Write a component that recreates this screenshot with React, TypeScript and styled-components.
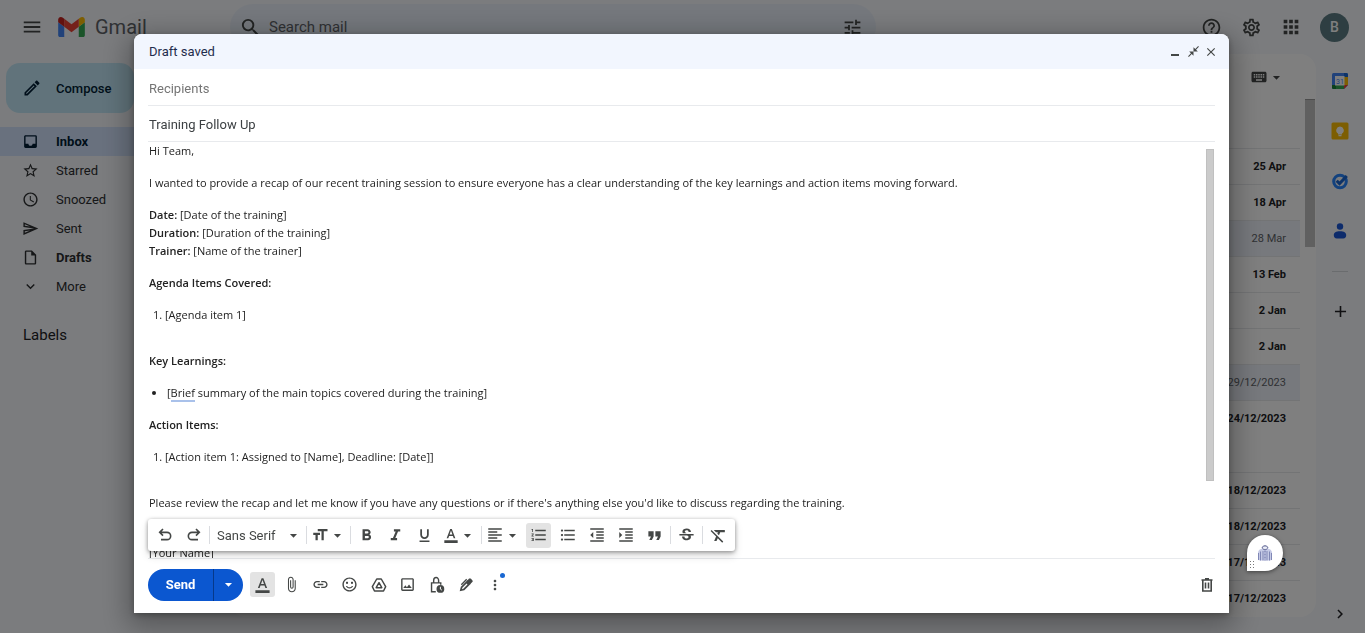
import React from 'react';
import styled, { createGlobalStyle, css } from 'styled-components';
import {
  MdMenu, MdSearch, MdTune, MdHelpOutline, MdOutlineSettings, MdApps, MdInbox, MdStarBorder,
  MdAccessTime, MdOutlineSend, MdOutlineInsertDriveFile, MdKeyboardArrowDown, MdKeyboard,
  MdArrowDropDown, MdFormatSize, MdFormatBold, MdFormatItalic, MdFormatUnderlined,
  MdFormatColorText, MdFormatAlignLeft, MdFormatListNumbered, MdFormatListBulleted,
  MdFormatIndentDecrease, MdFormatIndentIncrease, MdFormatQuote, MdStrikethroughS,
  MdFormatClear, MdAttachFile, MdLink, MdSentimentSatisfiedAlt, MdOutlineImage, MdMoreVert,
  MdClose, MdCloseFullscreen, MdAdd, MdChevronRight, MdOutlineEdit,
} from 'react-icons/md';

const ui = 'Roboto, "Liberation Sans", sans-serif';
const prose = '"Open Sans", "Noto Sans", sans-serif';

const GlobalStyle = createGlobalStyle`
  * { box-sizing: border-box; }
  body { margin: 0; font-family: ${ui}; background: #f6f8fc; color: #202124; overflow: hidden; }
  button, input, select { font: inherit; color: inherit; border: 0; background: none; padding: 0; margin: 0; outline: 0; }
  ul, ol, p { margin: 0; padding: 0; }
  svg { display: block; flex: none; }
`;

const Page = styled.div`
  display: flex;
  flex-direction: column;
  height: 100vh;
`;

const Header = styled.header`
  display: flex;
  align-items: center;
  height: 54px;
  padding: 0 16px 0 20px;
  color: #444746;
`;

const IconButton = styled.button`
  display: flex;
  align-items: center;
  justify-content: center;
  width: 24px;
  height: 24px;
`;

const Brand = styled.a`
  display: flex;
  align-items: center;
  gap: 10px;
  width: 172px;
  margin-left: 14px;
  font-size: 20px;
  color: #5f6368;
  text-decoration: none;
`;

const SearchBox = styled.form`
  display: flex;
  align-items: center;
  gap: 7px;
  width: 646px;
  height: 46px;
  padding: 0 12px 0 8px;
  border-radius: 24px;
  background: #eaf1fb;
  input { flex: 1; font-size: 15px; color: #444746; }
  input::placeholder { color: #5f6368; opacity: 1; }
`;

const HeaderTools = styled.div`
  display: flex;
  align-items: center;
  gap: 16px;
  margin-left: auto;
`;

const Avatar = styled.button`
  width: 29px;
  height: 29px;
  margin-left: 1px;
  border-radius: 50%;
  background: #5d7d84;
  color: #fff;
  font-size: 14px;
  font-weight: 500;
`;

const Columns = styled.div`
  display: flex;
  flex: 1;
  min-height: 0;
`;

const Sidebar = styled.nav`
  display: flex;
  flex-direction: column;
  width: 230px;
  padding-top: 9px;
`;

const Compose = styled.button`
  display: flex;
  align-items: center;
  gap: 14px;
  width: 128px;
  height: 50px;
  margin: 0 0 14px 6px;
  padding-left: 16px;
  border-radius: 14px;
  background: #c2e7f6;
  color: #001d35;
  font-size: 13px;
  font-weight: 500;
`;

const NavLink = styled.a<{ $active?: boolean; $strong?: boolean }>`
  display: flex;
  align-items: center;
  gap: 17px;
  height: 29px;
  padding-left: 22px;
  font-size: 13px;
  font-weight: ${(p) => (p.$active || p.$strong ? 700 : 400)};
  color: ${(p) => (p.$active ? '#001d35' : '#2d2f31')};
  background: ${(p) => (p.$active ? '#d3e3fd' : 'transparent')};
  border-radius: 0 15px 15px 0;
  text-decoration: none;
`;

const LabelsTitle = styled.h2`
  margin: 24px 0 0 23px;
  font-size: 15px;
  font-weight: 400;
  line-height: 20px;
`;

const MailPane = styled.main`
  display: flex;
  flex: 1;
  margin-bottom: 16px;
  border-radius: 16px;
  background: #fff;
  overflow: hidden;
`;

const MailColumn = styled.div`
  flex: 1;
`;

const MailToolbar = styled.div`
  display: flex;
  align-items: flex-start;
  justify-content: flex-end;
  height: 94px;
  padding: 14px 19px 0 0;
  color: #444746;
`;

const InputTools = styled.button`
  display: flex;
  align-items: center;
`;

const MailList = styled.ul`
  list-style: none;
`;

const MailRow = styled.li<{ $read?: boolean; $tall?: boolean }>`
  display: flex;
  justify-content: flex-end;
  height: ${(p) => (p.$tall ? 72 : 36)}px;
  margin-right: 4px;
  padding-right: 14px;
  border-top: 1px solid #e6e8eb;
  background: ${(p) => (p.$read ? '#eef2fa' : 'transparent')};
  color: ${(p) => (p.$read ? '#5f6368' : '#202124')};
  font-size: 11px;
  font-weight: ${(p) => (p.$read ? 400 : 700)};
  line-height: 35px;
`;

const MailScroll = styled.div`
  width: 12px;
  padding-top: 45px;
  &::before {
    content: '';
    display: block;
    width: 10px;
    height: 147px;
    margin-left: 1px;
    background: #c1c1c1;
    border-top: 1px solid #999;
  }
`;

const AppRail = styled.aside`
  display: flex;
  flex-direction: column;
  align-items: center;
  width: 49px;
  padding: 15px 1px 0 0;
  gap: 26px;
`;

const RailLink = styled.a<{ $last?: boolean }>`
  display: flex;
  align-items: center;
  justify-content: center;
  width: 24px;
  height: 24px;
  margin-top: ${(p) => (p.$last ? 'auto' : '0')};
  margin-bottom: ${(p) => (p.$last ? '7px' : '0')};
  color: #202124;
`;

const RailRule = styled.hr`
  width: 16px;
  margin: 2px 0 1px;
  border: 0;
  border-top: 1px solid #d5d8dc;
`;

const Scrim = styled.div`
  position: fixed;
  inset: 0;
  display: flex;
  padding: 34px 136px 20px 134px;
  background: rgba(0, 0, 0, 0.5);
`;

const Dialog = styled.section`
  position: relative;
  display: flex;
  flex-direction: column;
  flex: 1;
  min-width: 0;
  border-radius: 8px 8px 0 0;
  background: #fff;
  box-shadow: 0 8px 28px 6px rgba(0, 0, 0, 0.3), 0 2px 6px rgba(0, 0, 0, 0.3);
`;

const TitleBar = styled.header`
  display: flex;
  align-items: center;
  height: 35px;
  padding: 0 9px 0 15px;
  border-radius: 8px 8px 0 0;
  background: #f2f6fe;
  color: #1f2d4d;
  h1 { flex: 1; margin: 0; font-size: 13px; font-weight: 400; }
`;

const WindowButton = styled.button`
  display: flex;
  align-items: center;
  justify-content: center;
  width: 18px;
  height: 18px;
  color: #444746;
`;

const Field = styled.input`
  height: 36px;
  margin: 0 14px;
  padding: 2px 0 0 1px;
  font-size: 13px;
  border-bottom: 1px solid #e8eaed;
  color: #3c4043;
  &::placeholder { color: #757575; opacity: 1; }
`;

const Fields = styled.div`
  display: flex;
  flex-direction: column;
  padding-top: 1px;
`;

const Editor = styled.div`
  display: flex;
  flex: 1;
  min-height: 0;
  margin: 0 14px;
  padding-right: 1px;
  border-bottom: 1px solid #e8eaed;
  overflow: hidden;
`;

const Message = styled.div`
  flex: 1;
  padding-left: 1px;
  font-family: ${prose};
  font-size: 11px;
  line-height: 18px;
  color: #222;
  p, ul, ol { margin-bottom: 14px; }
  ol { margin-bottom: 28px; padding-left: 16px; }
  ul { padding-left: 18px; }
  b { font-weight: 600; }
`;

const Suggestion = styled.span`
  border-bottom: 2px solid #a9c1ea;
`;

const ScrollThumb = styled.div`
  width: 8px;
  height: 332px;
  margin-top: 7px;
  background: #cbcbcb;
  border: 1px solid #c0c0c0;
`;

const FormatBar = styled.div`
  position: absolute;
  left: 14px;
  bottom: 62px;
  display: flex;
  align-items: center;
  height: 32px;
  padding: 0 2px;
  border-radius: 3px;
  background: #fff;
  color: #444746;
  box-shadow: 0 1px 4px rgba(0, 0, 0, 0.4), 0 5px 9px rgba(0, 0, 0, 0.14);
`;

const Tool = styled.button<{ $menu?: boolean; $on?: boolean }>`
  position: relative;
  display: flex;
  align-items: center;
  justify-content: center;
  width: ${(p) => (p.$menu ? 39 : 25)}px;
  height: 25px;
  margin: 0 ${(p) => (p.$menu ? 1 : 2)}px;
  border-radius: 3px;
  ${(p) => p.$on && css`background: #e3e3e3;`}
`;

const Divider = styled.span`
  width: 1px;
  height: 18px;
  margin: 0 1px;
  background: #dadce0;
`;

const FontPicker = styled.label`
  display: flex;
  align-items: center;
  width: 94px;
  padding-left: 6px;
  select { appearance: none; width: 68px; font-size: 13px; }
`;

const ActionBar = styled.footer`
  display: flex;
  align-items: center;
  height: 54px;
  padding: 0 14px 3px;
  color: #444746;
`;

const SendGroup = styled.div`
  display: flex;
  height: 32px;
  margin: 0 5px 0 0;
  border-radius: 16px;
  background: #0b57d0;
  color: #fff;
  overflow: hidden;
`;

const SendButton = styled.button`
  width: 66px;
  border-right: 1px solid #06398a;
  font-size: 13px;
  font-weight: 700;
`;

const SendOptions = styled.button`
  display: flex;
  align-items: center;
  justify-content: center;
  width: 29px;
`;

const ActionTool = styled(Tool)<{ $end?: boolean }>`
  margin-left: ${(p) => (p.$end ? 'auto' : '2px')};
  ${(p) => p.$end && css`margin-right: -4px;`}
`;

const NewDot = styled.span`
  position: absolute;
  top: 1px;
  right: 2px;
  width: 5px;
  height: 5px;
  border-radius: 50%;
  background: #1967d2;
`;

const Bubble = styled.button`
  position: fixed;
  right: 82px;
  bottom: 62px;
  display: flex;
  align-items: center;
  justify-content: center;
  width: 36px;
  height: 36px;
  border-radius: 50% 50% 50% 0;
  background: #fff;
  box-shadow: 0 1px 4px rgba(0, 0, 0, 0.5);
`;

const Grip = styled.span`
  position: absolute;
  left: 2px;
  bottom: 2px;
`;

const GmailLogo = () => (
  <svg width="27" height="20" viewBox="52 42 88 66">
    <path fill="#4285f4" d="M58 108h14V74L52 59v43c0 3.32 2.69 6 6 6" />
    <path fill="#34a853" d="M120 108h14c3.32 0 6-2.69 6-6V59l-20 15" />
    <path fill="#fbbc04" d="M120 48v26l20-15v-8c0-7.42-8.47-11.65-14.4-7.2" />
    <path fill="#ea4335" d="M72 74V48l24 18 24-18v26L96 92" />
    <path fill="#c5221f" d="M52 51v8l20 15V48l-5.6-4.2c-5.94-4.45-14.4-.22-14.4 7.2" />
  </svg>
);

const Turn = ({ redo }: { redo?: boolean }) => (
  <svg width="16" height="16" viewBox="0 0 24 24" fill="none" stroke="currentColor" strokeWidth="2.4">
    {redo
      ? <path d="M15 3l5 5-5 5M19 8H9a5.500 5.500 0 0 0 0 11h9" />
      : <path d="M9 3L4 8l5 5M5 8h10a5.500 5.500 0 0 1 0 11H6" />}
  </svg>
);

const DriveIcon = () => (
  <svg width="16" height="16" viewBox="0 0 24 24" fill="none" stroke="currentColor" strokeWidth="2.2" strokeLinejoin="round">
    <path d="M8.600 3h6.800L22 14.500 18.800 21H5.200L2 14.500z" />
    <path d="M12 8.500l4.200 7.500H7.800z" />
  </svg>
);

const LockClock = () => (
  <svg width="17" height="18" viewBox="0 0 24 25" fill="none" stroke="currentColor" strokeWidth="2">
    <path d="M11 22H5V9.500h13V12M8 9V6a3.500 4 0 0 1 7 0v3" />
    <circle cx="17.500" cy="18" r="5.500" fill="currentColor" stroke="none" />
    <path d="M17.500 15v3.300l2 1.400" stroke="#fff" strokeWidth="1.400" />
  </svg>
);

const PenIcon = () => (
  <svg width="16" height="16" viewBox="0 0 24 24" fill="none">
    <path fill="currentColor" d="M2.500 21.500l1.800-7L14 4.800l5.200 5.200L9.500 19.700z" />
    <path fill="currentColor" d="M13 6l3.500-3.500a2 2 0 0 1 2.800 0l2.200 2.200a2 2 0 0 1 0 2.800L18 11z" />
    <path d="M5 11.500l8-8" stroke="currentColor" strokeWidth="2" />
    <path d="M6.500 17.500l7-7" stroke="#fff" strokeWidth="2" />
  </svg>
);

const TrashIcon = () => (
  <svg width="14" height="16" viewBox="0 0 14 16" fill="none" stroke="currentColor" strokeWidth="1.600">
    <path d="M1.500 3h11M5 1.700h4M2.800 3v11h8.400V3M5.500 5.500v6M8.500 5.500v6" />
  </svg>
);

const CalendarIcon = () => (
  <svg width="18" height="18" viewBox="0 0 18 18">
    <rect x="1" y="1" width="16" height="16" rx="1.500" fill="#4285f4" />
    <path fill="#1967d2" d="M13 1h2.500A1.500 1.500 0 0 1 17 2.500V5h-4z" />
    <path fill="#fbbc04" d="M13 5h4v8h-4z" />
    <path fill="#34a853" d="M5 13h8v4H5z" />
    <path fill="#188038" d="M1 13h4v4H2.500A1.500 1.500 0 0 1 1 15.500z" />
    <path fill="#f6f8fc" d="M13 17h4v-4z" />
    <path fill="#ea4335" d="M13 13h4l-4 4z" />
    <path fill="#fff" d="M4 4h9.500v9.500H4z" />
    <text x="9" y="11.500" textAnchor="middle" fontSize="7" fontFamily="Roboto, sans-serif" fill="#4285f4">31</text>
  </svg>
);

const KeepIcon = () => (
  <svg width="18" height="18" viewBox="0 0 18 18">
    <rect x="0.500" y="0.500" width="17" height="17" rx="1.500" fill="#fbbc04" />
    <path fill="#fff" d="M9 4.500a3.800 3.800 0 0 0-2 7v1h4v-1a3.800 3.800 0 0 0-2-7zM7.500 13h3v1.200h-3z" />
  </svg>
);

const TasksIcon = () => (
  <svg width="18" height="18" viewBox="0 0 18 18" fill="none">
    <circle cx="9" cy="9.500" r="6.300" stroke="#2684fc" strokeWidth="3" />
    <path d="M5.700 8.800l2.800 2.800L15.800 4" stroke="#1a66d0" strokeWidth="3" />
  </svg>
);

const ContactsIcon = () => (
  <svg width="16" height="18" viewBox="0 0 16 18" fill="#1a56d6">
    <circle cx="8" cy="4.500" r="3.200" />
    <path d="M1.800 13.300C1.800 10.500 4 9.200 8 9.200s6.200 1.300 6.200 4.100c0 2-1 3.200-3 3.200H4.800c-2 0-3-1.200-3-3.200z" />
  </svg>
);

const JacketArt = () => (
  <svg width="16" height="18" viewBox="0 0 16 18">
    <path fill="#c6cae6" d="M1 8.500Q1.500 5 5.500 4.500h5Q14.500 5 15 8.500V16l-2.500.5v-8 8h-9v-8 8L1 16z" />
    <path fill="none" stroke="#8087b5" d="M3.500 7.500v9M12.500 7.500v9M1.500 9v7M14.500 9v7M6 7v9.500M10 7v9.500" />
    <path fill="none" stroke="#6069a0" strokeDasharray="2 1" d="M8 6.500v10" />
    <path fill="#777ca4" d="M4.500 3.500Q6 1 8 1t3.500 2.500L9.500 6h-3z" />
    <ellipse cx="8" cy="3.800" rx="2.200" ry="1.300" fill="#eceef8" />
  </svg>
);

const GripDots = () => (
  <svg width="6" height="9" viewBox="0 0 6 9" fill="#777">
    <path d="M1 1h1v1H1zM4 1h1v1H4zM1 4h1v1H1zM4 4h1v1H4zM1 7h1v1H1zM4 7h1v1H4z" />
  </svg>
);

const folders = [
  { name: 'Inbox', icon: MdInbox, active: true },
  { name: 'Starred', icon: MdStarBorder },
  { name: 'Snoozed', icon: MdAccessTime },
  { name: 'Sent', icon: MdOutlineSend },
  { name: 'Drafts', icon: MdOutlineInsertDriveFile, strong: true },
  { name: 'More', icon: MdKeyboardArrowDown },
];

const mails = [
  { date: '25 Apr' }, { date: '18 Apr' }, { date: '28 Mar', read: true }, { date: '13 Feb' },
  { date: '2 Jan' }, { date: '2 Jan' }, { date: '29/12/2023', read: true },
  { date: '24/12/2023', tall: true }, { date: '18/12/2023' }, { date: '18/12/2023' },
  { date: '17/12/2023' }, { date: '17/12/2023' },
];

const Caret = () => <MdArrowDropDown size={17} />;

export default function App() {
  return (
    <>
      <GlobalStyle />
      <Page>
        <Header>
          <IconButton aria-label="Main menu"><MdMenu size={22} /></IconButton>
          <Brand href="#"><GmailLogo />Gmail</Brand>
          <SearchBox>
            <IconButton type="button" aria-label="Search"><MdSearch size={23} /></IconButton>
            <input aria-label="Search mail" placeholder="Search mail" />
            <IconButton type="button" aria-label="Search options"><MdTune size={21} /></IconButton>
          </SearchBox>
          <HeaderTools>
            <IconButton aria-label="Support"><MdHelpOutline size={21} /></IconButton>
            <IconButton aria-label="Settings"><MdOutlineSettings size={21} /></IconButton>
            <IconButton aria-label="Google apps"><MdApps size={22} /></IconButton>
            <Avatar aria-label="Account">B</Avatar>
          </HeaderTools>
        </Header>
        <Columns>
          <Sidebar>
            <Compose><MdOutlineEdit size={20} />Compose</Compose>
            {folders.map(({ name, icon: Icon, active, strong }) => (
              <NavLink key={name} href="#" $active={active} $strong={strong}><Icon size={17} />{name}</NavLink>
            ))}
            <LabelsTitle>Labels</LabelsTitle>
          </Sidebar>
          <MailPane>
            <MailColumn>
              <MailToolbar>
                <InputTools aria-label="Input tools"><MdKeyboard size={18} /><Caret /></InputTools>
              </MailToolbar>
              <MailList>
                {mails.map((m, i) => (
                  <MailRow key={i} $read={m.read} $tall={m.tall}><time>{m.date}</time></MailRow>
                ))}
              </MailList>
            </MailColumn>
            <MailScroll />
          </MailPane>
          <AppRail>
            <RailLink href="#" aria-label="Calendar"><CalendarIcon /></RailLink>
            <RailLink href="#" aria-label="Keep"><KeepIcon /></RailLink>
            <RailLink href="#" aria-label="Tasks"><TasksIcon /></RailLink>
            <RailLink href="#" aria-label="Contacts"><ContactsIcon /></RailLink>
            <RailRule />
            <RailLink href="#" aria-label="Get add-ons"><MdAdd size={19} /></RailLink>
            <RailLink href="#" aria-label="Hide side panel" $last><MdChevronRight size={18} /></RailLink>
          </AppRail>
        </Columns>
      </Page>

      <Scrim>
        <Dialog role="dialog" aria-label="Draft saved">
          <TitleBar>
            <h1>Draft saved</h1>
            <WindowButton aria-label="Minimise">
              <svg width="8" height="8" viewBox="0 0 8 8"><path d="M0 7h8" stroke="currentColor" strokeWidth="2" /></svg>
            </WindowButton>
            <WindowButton aria-label="Exit full screen"><MdCloseFullscreen size={13} /></WindowButton>
            <WindowButton aria-label="Close"><MdClose size={14} /></WindowButton>
          </TitleBar>
          <Fields>
            <Field aria-label="Recipients" placeholder="Recipients" />
            <Field aria-label="Subject" defaultValue="Training Follow Up" />
          </Fields>
          <Editor>
            <Message role="textbox" aria-label="Message body" aria-multiline="true">
              <p>Hi Team,</p>
              <p>I wanted to provide a recap of our recent training session to ensure everyone has a clear understanding of the key learnings and action items moving forward.</p>
              <p>
                <b>Date:</b> [Date of the training]<br />
                <b>Duration:</b> [Duration of the training]<br />
                <b>Trainer:</b> [Name of the trainer]
              </p>
              <p><b>Agenda Items Covered:</b></p>
              <ol><li>[Agenda item 1]</li></ol>
              <p><b>Key Learnings:</b></p>
              <ul><li>[<Suggestion>Brief</Suggestion> summary of the main topics covered during the training]</li></ul>
              <p><b>Action Items:</b></p>
              <ol><li>[Action item 1: Assigned to [Name], Deadline: [Date]]</li></ol>
              <p>Please review the recap and let me know if you have any questions or if there's anything else you'd like to discuss regarding the training.</p>
              <p><br />[Your Name]</p>
            </Message>
            <ScrollThumb />
          </Editor>
          <FormatBar role="toolbar" aria-label="Formatting options">
            <Tool aria-label="Undo"><Turn /></Tool>
            <Tool aria-label="Redo"><Turn redo /></Tool>
            <Divider />
            <FontPicker>
              <select aria-label="Font"><option>Sans Serif</option></select>
              <Caret />
            </FontPicker>
            <Divider />
            <Tool $menu aria-label="Size"><MdFormatSize size={18} /><Caret /></Tool>
            <Divider />
            <Tool aria-label="Bold"><MdFormatBold size={19} /></Tool>
            <Tool aria-label="Italic"><MdFormatItalic size={19} /></Tool>
            <Tool aria-label="Underline"><MdFormatUnderlined size={17} /></Tool>
            <Tool $menu aria-label="Text colour"><MdFormatColorText size={16} /><Caret /></Tool>
            <Divider />
            <Tool $menu aria-label="Align"><MdFormatAlignLeft size={18} /><Caret /></Tool>
            <Tool $on aria-label="Numbered list"><MdFormatListNumbered size={18} /></Tool>
            <Tool aria-label="Bulleted list"><MdFormatListBulleted size={18} /></Tool>
            <Tool aria-label="Indent less"><MdFormatIndentDecrease size={18} /></Tool>
            <Tool aria-label="Indent more"><MdFormatIndentIncrease size={18} /></Tool>
            <Tool aria-label="Quote"><MdFormatQuote size={21} /></Tool>
            <Divider />
            <Tool aria-label="Strikethrough"><MdStrikethroughS size={19} /></Tool>
            <Divider />
            <Tool aria-label="Remove formatting"><MdFormatClear size={19} /></Tool>
          </FormatBar>
          <ActionBar>
            <SendGroup>
              <SendButton>Send</SendButton>
              <SendOptions aria-label="More send options"><Caret /></SendOptions>
            </SendGroup>
            <ActionTool $on aria-label="Formatting options"><MdFormatColorText size={17} /></ActionTool>
            <ActionTool aria-label="Attach files"><MdAttachFile size={17} /></ActionTool>
            <ActionTool aria-label="Insert link"><MdLink size={17} /></ActionTool>
            <ActionTool aria-label="Insert emoji"><MdSentimentSatisfiedAlt size={17} /></ActionTool>
            <ActionTool aria-label="Insert files using Drive"><DriveIcon /></ActionTool>
            <ActionTool aria-label="Insert photo"><MdOutlineImage size={17} /></ActionTool>
            <ActionTool aria-label="Toggle confidential mode"><LockClock /></ActionTool>
            <ActionTool aria-label="Insert signature"><PenIcon /></ActionTool>
            <ActionTool aria-label="More options"><MdMoreVert size={16} /><NewDot /></ActionTool>
            <ActionTool $end aria-label="Discard draft"><TrashIcon /></ActionTool>
          </ActionBar>
        </Dialog>
      </Scrim>
      <Bubble aria-label="Assistant"><JacketArt /><Grip><GripDots /></Grip></Bubble>
    </>
  );
}
